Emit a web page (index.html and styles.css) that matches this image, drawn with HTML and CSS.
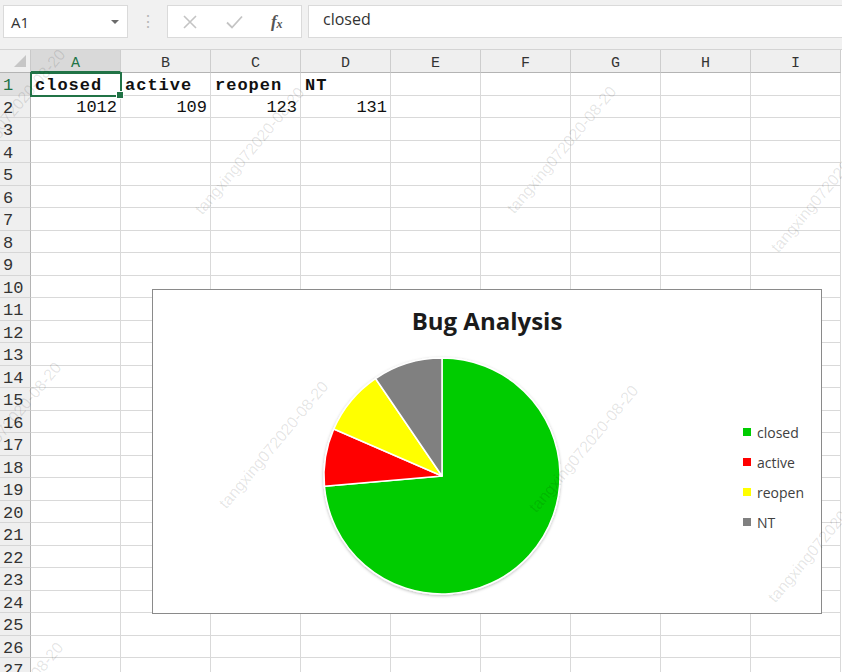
FILE: index.html
```html
<!DOCTYPE html>
<html>
<head>
<meta charset="utf-8">
<link rel="stylesheet" href="styles.css">
</head>
<body>
<div class="app">
  <div class="toolbar">
    <div class="namebox"><span>A1</span><span class="caret"></span></div>
    <div class="sep">⋮</div>
    <div class="fxbox">
      <span class="slot"><svg width="14" height="14" viewBox="0 0 14 14"><path d="M1 1L13 13M13 1L1 13" stroke="#c4c4c4" stroke-width="1.6" fill="none"/></svg></span>
      <span class="slot"><svg width="17" height="14" viewBox="0 0 17 14"><path d="M1 7.5L6 12.5L16 1.5" stroke="#c4c4c4" stroke-width="1.8" fill="none"/></svg></span>
      <span class="slot fx"><i>f</i><i class="sub">x</i></span>
    </div>
    <div class="formula">closed</div>
  </div>
  <div class="sheet">
    <div class="grid">
      <div class="corner"><span class="tri"></span></div>
      <div class="ch selh">A</div><div class="ch">B</div><div class="ch">C</div><div class="ch">D</div><div class="ch">E</div><div class="ch">F</div><div class="ch">G</div><div class="ch">H</div><div class="ch">I</div>

      <div class="rh selr">1</div><div class="c t sel">closed</div><div class="c t">active</div><div class="c t">reopen</div><div class="c t">NT</div><div class="c"></div><div class="c"></div><div class="c"></div><div class="c"></div><div class="c"></div>
      <div class="rh">2</div><div class="c n">1012</div><div class="c n">109</div><div class="c n">123</div><div class="c n">131</div><div class="c"></div><div class="c"></div><div class="c"></div><div class="c"></div><div class="c"></div>
      <div class="rh">3</div><div class="c"></div><div class="c"></div><div class="c"></div><div class="c"></div><div class="c"></div><div class="c"></div><div class="c"></div><div class="c"></div><div class="c"></div>
      <div class="rh">4</div><div class="c"></div><div class="c"></div><div class="c"></div><div class="c"></div><div class="c"></div><div class="c"></div><div class="c"></div><div class="c"></div><div class="c"></div>
      <div class="rh">5</div><div class="c"></div><div class="c"></div><div class="c"></div><div class="c"></div><div class="c"></div><div class="c"></div><div class="c"></div><div class="c"></div><div class="c"></div>
      <div class="rh">6</div><div class="c"></div><div class="c"></div><div class="c"></div><div class="c"></div><div class="c"></div><div class="c"></div><div class="c"></div><div class="c"></div><div class="c"></div>
      <div class="rh">7</div><div class="c"></div><div class="c"></div><div class="c"></div><div class="c"></div><div class="c"></div><div class="c"></div><div class="c"></div><div class="c"></div><div class="c"></div>
      <div class="rh">8</div><div class="c"></div><div class="c"></div><div class="c"></div><div class="c"></div><div class="c"></div><div class="c"></div><div class="c"></div><div class="c"></div><div class="c"></div>
      <div class="rh">9</div><div class="c"></div><div class="c"></div><div class="c"></div><div class="c"></div><div class="c"></div><div class="c"></div><div class="c"></div><div class="c"></div><div class="c"></div>
      <div class="rh">10</div><div class="c"></div><div class="c"></div><div class="c"></div><div class="c"></div><div class="c"></div><div class="c"></div><div class="c"></div><div class="c"></div><div class="c"></div>
      <div class="rh">11</div><div class="c"></div><div class="c"></div><div class="c"></div><div class="c"></div><div class="c"></div><div class="c"></div><div class="c"></div><div class="c"></div><div class="c"></div>
      <div class="rh">12</div><div class="c"></div><div class="c"></div><div class="c"></div><div class="c"></div><div class="c"></div><div class="c"></div><div class="c"></div><div class="c"></div><div class="c"></div>
      <div class="rh">13</div><div class="c"></div><div class="c"></div><div class="c"></div><div class="c"></div><div class="c"></div><div class="c"></div><div class="c"></div><div class="c"></div><div class="c"></div>
      <div class="rh">14</div><div class="c"></div><div class="c"></div><div class="c"></div><div class="c"></div><div class="c"></div><div class="c"></div><div class="c"></div><div class="c"></div><div class="c"></div>
      <div class="rh">15</div><div class="c"></div><div class="c"></div><div class="c"></div><div class="c"></div><div class="c"></div><div class="c"></div><div class="c"></div><div class="c"></div><div class="c"></div>
      <div class="rh">16</div><div class="c"></div><div class="c"></div><div class="c"></div><div class="c"></div><div class="c"></div><div class="c"></div><div class="c"></div><div class="c"></div><div class="c"></div>
      <div class="rh">17</div><div class="c"></div><div class="c"></div><div class="c"></div><div class="c"></div><div class="c"></div><div class="c"></div><div class="c"></div><div class="c"></div><div class="c"></div>
      <div class="rh">18</div><div class="c"></div><div class="c"></div><div class="c"></div><div class="c"></div><div class="c"></div><div class="c"></div><div class="c"></div><div class="c"></div><div class="c"></div>
      <div class="rh">19</div><div class="c"></div><div class="c"></div><div class="c"></div><div class="c"></div><div class="c"></div><div class="c"></div><div class="c"></div><div class="c"></div><div class="c"></div>
      <div class="rh">20</div><div class="c"></div><div class="c"></div><div class="c"></div><div class="c"></div><div class="c"></div><div class="c"></div><div class="c"></div><div class="c"></div><div class="c"></div>
      <div class="rh">21</div><div class="c"></div><div class="c"></div><div class="c"></div><div class="c"></div><div class="c"></div><div class="c"></div><div class="c"></div><div class="c"></div><div class="c"></div>
      <div class="rh">22</div><div class="c"></div><div class="c"></div><div class="c"></div><div class="c"></div><div class="c"></div><div class="c"></div><div class="c"></div><div class="c"></div><div class="c"></div>
      <div class="rh">23</div><div class="c"></div><div class="c"></div><div class="c"></div><div class="c"></div><div class="c"></div><div class="c"></div><div class="c"></div><div class="c"></div><div class="c"></div>
      <div class="rh">24</div><div class="c"></div><div class="c"></div><div class="c"></div><div class="c"></div><div class="c"></div><div class="c"></div><div class="c"></div><div class="c"></div><div class="c"></div>
      <div class="rh">25</div><div class="c"></div><div class="c"></div><div class="c"></div><div class="c"></div><div class="c"></div><div class="c"></div><div class="c"></div><div class="c"></div><div class="c"></div>
      <div class="rh">26</div><div class="c"></div><div class="c"></div><div class="c"></div><div class="c"></div><div class="c"></div><div class="c"></div><div class="c"></div><div class="c"></div><div class="c"></div>
      <div class="rh">27</div><div class="c"></div><div class="c"></div><div class="c"></div><div class="c"></div><div class="c"></div><div class="c"></div><div class="c"></div><div class="c"></div><div class="c"></div>
    </div>

    <div class="chart">
      <div class="chart-title">Bug Analysis</div>
      <div class="chart-body">
        <svg class="pie" width="260" height="262" viewBox="0 0 260 262">
          <defs>
            <filter id="sh" x="-10%" y="-10%" width="120%" height="120%">
              <feDropShadow dx="0" dy="1" stdDeviation="1.6" flood-color="#000" flood-opacity="0.28"/>
            </filter>
          </defs>
          <g filter="url(#sh)" stroke="#fff" stroke-width="1.5" stroke-linejoin="round">
            <path d="M129 138 L129 20 A118 118 0 1 1 11.46 148.37 Z" fill="#00cc00"/>
            <path d="M129 138 L11.46 148.37 A118 118 0 0 1 20.79 90.95 Z" fill="#ff0000"/>
            <path d="M129 138 L20.79 90.95 A118 118 0 0 1 62.50 40.52 Z" fill="#ffff00"/>
            <path d="M129 138 L62.50 40.52 A118 118 0 0 1 129 20 Z" fill="#808080"/>
          </g>
        </svg>
        <ul class="legend">
          <li><span class="sw green"></span>closed</li>
          <li><span class="sw red"></span>active</li>
          <li><span class="sw yellow"></span>reopen</li>
          <li><span class="sw gray"></span>NT</li>
        </ul>
      </div>
    </div>

    <span class="wm wm1">tangxing072020-08-20</span>
    <span class="wm wm2">tangxing072020-08-20</span>
    <span class="wm wm3">tangxing072020-08-20</span>
    <span class="wm wm4">tangxing072020-08-20</span>
    <span class="wm wm5">tangxing072020-08-20</span>
    <span class="wm wm6">tangxing072020-08-20</span>
    <span class="wm wm7">tangxing072020-08-20</span>
    <span class="wm wm8">tangxing072020-08-20</span>
    <span class="wm wm9">tangxing072020-08-20</span>
  </div>
</div>
</body>
</html>
```
FILE: styles.css
```css
* { box-sizing: border-box; }
body {
  margin: 0;
  width: 842px;
  height: 672px;
  overflow: hidden;
  background: #fff;
  font-family: "Liberation Sans", Arial, sans-serif;
}
.app { width: 842px; height: 672px; overflow: hidden; }

/* toolbar */
.toolbar {
  height: 50px;
  background: #f1f1f1;
  border-bottom: 1px solid #d4d4d4;
  display: flex;
  align-items: flex-start;
  padding-top: 5px;
}
.namebox {
  margin-left: 3px;
  width: 125px;
  height: 33px;
  background: #fff;
  border: 1px solid #dadada;
  display: flex;
  align-items: center;
  justify-content: space-between;
  padding: 0 8px 0 7px;
  font: 15px "Open Sans", "Noto Sans", sans-serif;
  color: #333;
}
.caret {
  width: 0; height: 0;
  border-left: 4.5px solid transparent;
  border-right: 4.5px solid transparent;
  border-top: 4.5px solid #6b6b6b;
}
.sep {
  width: 39px;
  height: 33px;
  text-align: center;
  line-height: 33px;
  color: #b8b8b8;
  font-size: 16px;
}
.fxbox {
  width: 135px;
  height: 33px;
  background: #fff;
  border: 1px solid #dadada;
  display: flex;
  align-items: center;
}
.slot {
  width: 46px;
  display: flex;
  justify-content: center;
  align-items: center;
}
.slot svg { display: block; }
.fx { font-family: "Liberation Serif", serif; color: #555; padding-right: 4px; }
.fx i { font-size: 17px; font-weight: bold; }
.fx i.sub { font-size: 12px; margin-top: 5px; }
.formula {
  margin-left: 6px;
  flex: 1;
  height: 33px;
  background: #fff;
  border: 1px solid #dadada;
  border-right: none;
  padding-left: 14px;
  padding-top: 2px;
  line-height: 30px;
  font: 16px "Open Sans", "Noto Sans", sans-serif;
  color: #333;
}

/* sheet */
.sheet {
  position: relative;
  height: 622px;
  overflow: hidden;
}
.grid {
  display: grid;
  grid-template-columns: 31px repeat(9, 90px);
  grid-template-rows: 23px repeat(27, 22.5px);
}
.corner {
  background: #efefef;
  border-right: 1px solid #c9c9c9;
  border-bottom: 1px solid #b4b4b4;
  position: relative;
}
.tri {
  position: absolute;
  right: 4px;
  bottom: 5px;
  width: 12px;
  height: 12px;
  background: #c6c6c6;
  clip-path: polygon(100% 0, 100% 100%, 0 100%);
}
.ch {
  background: #efefef;
  border-right: 1px solid #cdcdcd;
  border-bottom: 1px solid #b4b4b4;
  text-align: center;
  font: 15px "Liberation Mono", monospace;
  line-height: 22px;
  padding-top: 3px;
  color: #333;
}
.ch.selh {
  background: #d9d9d9;
  color: #217346;
  border-bottom: 2px solid #217346;
}
.rh {
  background: #efefef;
  border-right: 1px solid #b4b4b4;
  border-bottom: 1px solid #d6d6d6;
  font: 17px "Liberation Mono", monospace;
  line-height: 22px;
  padding-top: 2px;
  padding-left: 3px;
  color: #333;
  overflow: hidden;
}
.rh.selr { background: #e0e0e0; color: #217346; }
.c {
  border-right: 1px solid #d9d9d9;
  border-bottom: 1px solid #d9d9d9;
  font: 17px "Liberation Mono", monospace;
  line-height: 22px;
  padding-top: 1px;
  color: #111;
  white-space: nowrap;
  overflow: visible;
  position: relative;
}
.c.t {
  font-weight: bold;
  letter-spacing: 1px;
  padding-left: 4px;
  padding-top: 2px;
}
.c.n { text-align: right; padding-right: 3px; }
.c.sel {
  outline: 2px solid #217346;
  outline-offset: -1px;
  z-index: 2;
}
.c.sel::after {
  content: "";
  position: absolute;
  right: -4px;
  bottom: -4px;
  width: 6px;
  height: 6px;
  background: #217346;
  border: 1px solid #fff;
}

/* chart */
.chart {
  position: absolute;
  left: 152px;
  top: 239px;
  width: 670px;
  height: 325px;
  background: #fff;
  border: 1px solid #8a8a8a;
  z-index: 3;
}
.chart-title {
  margin-top: 14px;
  height: 34px;
  line-height: 34px;
  text-align: center;
  font: bold 24px "Open Sans", "Liberation Sans", sans-serif;
  color: #1b1b1b;
}
.chart-body { display: flex; align-items: flex-start; }
.pie { display: block; margin-left: 160px; }
.legend {
  list-style: none;
  margin: 79px 0 0 170px;
  padding: 0;
}
.legend li {
  height: 30px;
  display: flex;
  align-items: center;
  font: 14px "Open Sans", "Noto Sans", sans-serif;
  color: #404040;
}
.sw { width: 8px; height: 8px; margin-right: 6px; }
.sw.green { background: #00cc00; }
.sw.red { background: #ff0000; }
.sw.yellow { background: #ffff00; }
.sw.gray { background: #808080; }

/* watermarks */
.wm {
  position: absolute;
  transform: translate(-50%, -50%) rotate(-50deg);
  font: 16px "Liberation Sans", sans-serif;
  color: rgba(0, 0, 0, 0.11);
  white-space: nowrap;
  z-index: 5;
  pointer-events: none;
}
.wm1 { left: 11px; top: 63px; }
.wm2 { left: 250px; top: 101px; }
.wm3 { left: 562px; top: 100px; }
.wm4 { left: 826px; top: 139px; }
.wm5 { left: 7px; top: 376px; }
.wm6 { left: 274px; top: 395px; }
.wm7 { left: 584px; top: 399px; }
.wm8 { left: 823px; top: 489px; }
.wm9 { left: 9px; top: 656px; }
```
